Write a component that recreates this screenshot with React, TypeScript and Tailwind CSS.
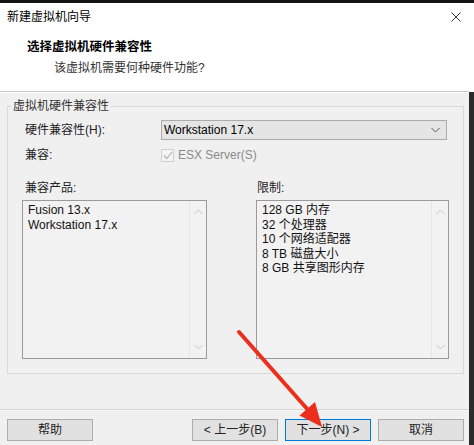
import { ReactNode } from "react";

const font = "font-['Liberation_Sans','Noto_Sans_CJK_SC',sans-serif]";

const ChevronUp = () => (
  <svg width="9" height="6" viewBox="0 0 9 6" fill="none" stroke="#c4c4c4" strokeWidth="1">
    <path d="M0.5 5 L4.5 1 L8.5 5" />
  </svg>
);

const ChevronDown = ({ color = "#c4c4c4" }: { color?: string }) => (
  <svg width="9" height="6" viewBox="0 0 9 6" fill="none" stroke={color} strokeWidth="1">
    <path d="M0.5 1 L4.5 5 L8.5 1" />
  </svg>
);

const ListBox = ({ items, width }: { items: ReactNode[]; width: string }) => (
  <div className={`${width} h-[159px] border border-[#9a9a9a] bg-[#f2f2f2] flex`}>
    <div className="flex-1 pt-[2px] pl-[5px] text-[12px] leading-[14.5px] text-[#111]">
      {items.map((it, i) => (
        <div key={i}>{it}</div>
      ))}
    </div>
    <div className="w-[17px] border-l border-[#e6e6e6] flex flex-col items-center justify-between pt-[8px] pb-[8px]">
      <ChevronUp />
      <ChevronDown />
    </div>
  </div>
);

const Btn = ({ children, primary }: { children: ReactNode; primary?: boolean }) => (
  <button
    className={`w-[86px] h-[22px] bg-[#e1e1e1] border text-[12px] leading-[20px] text-[#222] ${
      primary ? "border-[#0078d7]" : "border-[#adadad]"
    }`}
  >
    {children}
  </button>
);

export default function App() {
  return (
    <div className={`w-[474px] h-[445px] relative overflow-hidden bg-[#f0f0f0] ${font}`}>
      <div className="h-[3px] bg-[#141414]" />
      <div className="flex h-[442px]">
        <div className="w-[469px] flex flex-col">
          {/* header */}
          <div className="h-[88px] bg-white">
            <div className="h-[27px] flex items-center justify-between pl-[7px] pr-[8px]">
              <span className="text-[12px] leading-[26px] text-black">新建虚拟机向导</span>
              <svg width="10" height="10" viewBox="0 0 10 10" stroke="#333" strokeWidth="1">
                <path d="M0.5 0.5 L9.5 9.5 M9.5 0.5 L0.5 9.5" />
              </svg>
            </div>
            <div className="mt-[9px] pl-[27px] text-[12.5px] leading-[16px] font-bold text-black">
              选择虚拟机硬件兼容性
            </div>
            <div className="mt-[5px] pl-[54px] text-[12px] leading-[16px] text-[#333]">
              该虚拟机需要何种硬件功能?
            </div>
          </div>
          <div className="h-px bg-[#c8c8c8]" />
          <div className="h-px bg-white" />

          {/* group */}
          <fieldset className="mt-[5px] ml-[7px] w-[457px] h-[276px] border border-[#d9d9d9] px-0 pb-0 pt-0">
            <legend className="ml-[3px] px-[2px] text-[12px] leading-[16px] text-[#333]">
              虚拟机硬件兼容性
            </legend>
            <div className="mt-[6px] flex items-center h-[20px] pl-[17px]">
              <span className="w-[136px] text-[12px] text-[#222]">硬件兼容性(H):</span>
              <div className="w-[286px] h-[20px] bg-[#e5e5e5] border border-[#acacac] flex items-center justify-between pl-[2px] pr-[6px]">
                <span className="text-[12px] text-black">Workstation 17.x</span>
                <ChevronDown color="#555" />
              </div>
            </div>
            <div className="mt-[5px] flex items-center h-[20px] pl-[17px]">
              <span className="w-[136px] text-[12px] text-[#222]">兼容:</span>
              <div className="w-[13px] h-[13px] border border-[#cfcfcf] bg-[#f4f4f4] flex items-center justify-center">
                <svg width="10" height="9" viewBox="0 0 10 9" fill="none" stroke="#b4b4b4" strokeWidth="1.2">
                  <path d="M1 4.5 L3.8 7.5 L9 1" />
                </svg>
              </div>
              <span className="ml-[4px] text-[12px] text-[#8a8a8a]">ESX Server(S)</span>
            </div>
            <div className="mt-[15px] flex pl-[14px] gap-[49px]">
              <div>
                <div className="pl-[3px] text-[12px] leading-[16px] text-[#222]">兼容产品:</div>
                <div className="mt-[4px]">
                  <ListBox width="w-[185px]" items={["Fusion 13.x", "Workstation 17.x"]} />
                </div>
              </div>
              <div>
                <div className="pl-[1px] text-[12px] leading-[16px] text-[#222]">限制:</div>
                <div className="mt-[4px]">
                  <ListBox
                    width="w-[193px]"
                    items={["128 GB 内存", "32 个处理器", "10 个网络适配器", "8 TB 磁盘大小", "8 GB 共享图形内存"]}
                  />
                </div>
              </div>
            </div>
          </fieldset>

          <div className="mt-[35px] h-px bg-[#d2d2d2]" />
          <div className="h-px bg-[#fafafa]" />
          <div className="mt-[8px] flex pl-[7px]">
            <Btn>帮助</Btn>
            <div className="ml-[99px] flex gap-[7px]">
              <Btn>&lt; 上一步(B)</Btn>
              <Btn primary>下一步(N) &gt;</Btn>
              <Btn>取消</Btn>
            </div>
          </div>
        </div>
        <div className="w-[5px] flex flex-col">
          <div className="h-[89px] bg-white" />
          <div className="flex-1 bg-[#2b2b2b]" />
        </div>
      </div>

      {/* red annotation arrow */}
      <svg className="absolute left-0 top-0 pointer-events-none" width="474" height="445">
        <line x1="239" y1="332" x2="309" y2="411" stroke="#ec2f1c" strokeWidth="4" strokeLinecap="round" />
        <polygon points="322,427 299.5,415.5 315,402" fill="#ec2f1c" />
      </svg>
    </div>
  );
}
